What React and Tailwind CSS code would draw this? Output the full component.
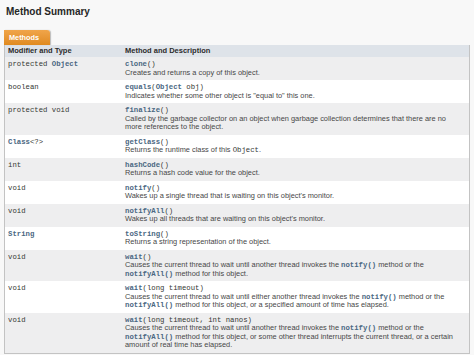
const LINK = "font-bold text-[#4a6782]";

const Code = ({ children, link }) => (
  <code
    className={`text-[7.3px] ${link ? LINK : "text-[#353833]"}`}
    style={{ fontFamily: '"Liberation Mono", monospace' }}
  >
    {children}
  </code>
);

const rows = [
  {
    type: (
      <>
        <Code>protected </Code>
        <Code link>Object</Code>
      </>
    ),
    method: (
      <>
        <Code link>clone</Code>
        <Code>()</Code>
      </>
    ),
    desc: ["Creates and returns a copy of this object."],
  },
  {
    type: <Code>boolean</Code>,
    method: (
      <>
        <Code link>equals</Code>
        <Code>(</Code>
        <Code link>Object</Code>
        <Code>&nbsp;obj)</Code>
      </>
    ),
    desc: ['Indicates whether some other object is "equal to" this one.'],
  },
  {
    type: <Code>protected void</Code>,
    method: (
      <>
        <Code link>finalize</Code>
        <Code>()</Code>
      </>
    ),
    desc: [
      "Called by the garbage collector on an object when garbage collection determines that there are no",
      "more references to the object.",
    ],
  },
  {
    type: (
      <>
        <Code link>Class</Code>
        <Code>&lt;?&gt;</Code>
      </>
    ),
    method: (
      <>
        <Code link>getClass</Code>
        <Code>()</Code>
      </>
    ),
    desc: [
      <>
        Returns the runtime class of this <Code>Object</Code>.
      </>,
    ],
  },
  {
    type: <Code>int</Code>,
    method: (
      <>
        <Code link>hashCode</Code>
        <Code>()</Code>
      </>
    ),
    desc: ["Returns a hash code value for the object."],
  },
  {
    type: <Code>void</Code>,
    method: (
      <>
        <Code link>notify</Code>
        <Code>()</Code>
      </>
    ),
    desc: ["Wakes up a single thread that is waiting on this object's monitor."],
  },
  {
    type: <Code>void</Code>,
    method: (
      <>
        <Code link>notifyAll</Code>
        <Code>()</Code>
      </>
    ),
    desc: ["Wakes up all threads that are waiting on this object's monitor."],
  },
  {
    type: <Code link>String</Code>,
    method: (
      <>
        <Code link>toString</Code>
        <Code>()</Code>
      </>
    ),
    desc: ["Returns a string representation of the object."],
  },
  {
    type: <Code>void</Code>,
    method: (
      <>
        <Code link>wait</Code>
        <Code>()</Code>
      </>
    ),
    desc: [
      <>
        Causes the current thread to wait until another thread invokes the <Code link>notify()</Code> method or the
      </>,
      <>
        <Code link>notifyAll()</Code> method for this object.
      </>,
    ],
  },
  {
    type: <Code>void</Code>,
    method: (
      <>
        <Code link>wait</Code>
        <Code>(long&nbsp;timeout)</Code>
      </>
    ),
    desc: [
      <>
        Causes the current thread to wait until either another thread invokes the <Code link>notify()</Code> method or
        the
      </>,
      <>
        <Code link>notifyAll()</Code> method for this object, or a specified amount of time has elapsed.
      </>,
    ],
  },
  {
    type: <Code>void</Code>,
    method: (
      <>
        <Code link>wait</Code>
        <Code>(long&nbsp;timeout, int&nbsp;nanos)</Code>
      </>
    ),
    desc: [
      <>
        Causes the current thread to wait until another thread invokes the <Code link>notify()</Code> method or the
      </>,
      <>
        <Code link>notifyAll()</Code> method for this object, or some other thread interrupts the current thread, or a
        certain
      </>,
      "amount of real time has elapsed.",
    ],
  },
];

export default function App() {
  return (
    <div
      className="w-[474px] h-[355px] overflow-hidden bg-[#f8f8f8] text-[#474747]"
      style={{ fontFamily: '"Liberation Sans", Arial, sans-serif' }}
    >
      {/* Title */}
      <h3 className="pt-[6px] pl-[6px] text-[10px] leading-[12px] font-bold text-[#262626]">
        Method Summary
      </h3>

      <div className="px-[4px] pt-[12px]">
        {/* Tab */}
        <div className="flex">
          <div className="h-[15px] w-[46px] rounded-tr-[3px] bg-gradient-to-b from-[#f0a54a] to-[#e08a1e] pl-[5px] text-[7.3px] leading-[16px] font-bold text-white shadow-[1px_0_1px_#bbb]">
            Methods
          </div>
        </div>

        {/* Table */}
        <div className="border-x border-b border-[#c3c3c3] bg-white">
          <div className="flex bg-[#dee3e9] text-[7.5px] leading-[12px] font-bold text-[#2c2c2c]">
            <div className="w-[117px] shrink-0 pl-[3px]">Modifier and Type</div>
            <div className="pl-[3px]">Method and Description</div>
          </div>
          {rows.map((row, i) => (
            <div
              key={i}
              className={`flex py-[3px] text-[7.4px] leading-[8.5px] whitespace-nowrap ${
                i % 2 === 0 ? "bg-[#eeeeef]" : "bg-white"
              }`}
            >
              <div className="w-[117px] shrink-0 pl-[3px]">
                <div className="h-[8.5px]">{row.type}</div>
              </div>
              <div className="pl-[3px]">
                <div className="h-[8.5px]">{row.method}</div>
                {row.desc.map((line, j) => (
                  <div key={j} className="h-[8.5px]">
                    {line}
                  </div>
                ))}
              </div>
            </div>
          ))}
        </div>
      </div>
    </div>
  );
}
